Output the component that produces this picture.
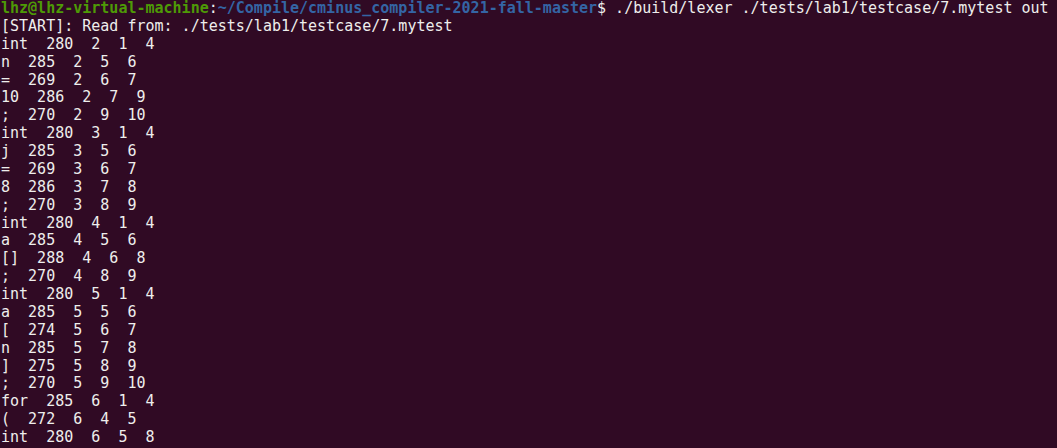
const lines: string[] = [
  "[START]: Read from: ./tests/lab1/testcase/7.mytest",
  "int  280  2  1  4",
  "n  285  2  5  6",
  "=  269  2  6  7",
  "10  286  2  7  9",
  ";  270  2  9  10",
  "int  280  3  1  4",
  "j  285  3  5  6",
  "=  269  3  6  7",
  "8  286  3  7  8",
  ";  270  3  8  9",
  "int  280  4  1  4",
  "a  285  4  5  6",
  "[]  288  4  6  8",
  ";  270  4  8  9",
  "int  280  5  1  4",
  "a  285  5  5  6",
  "[  274  5  6  7",
  "n  285  5  7  8",
  "]  275  5  8  9",
  ";  270  5  9  10",
  "for  285  6  1  4",
  "(  272  6  4  5",
  "int  280  6  5  8",
]

const App = () => {
  return (
    <div
      className="w-[1057px] h-[448px] overflow-hidden bg-[#300a24] text-[#eeeeec] text-[15px] leading-[17.875px] pl-[1px] whitespace-pre"
      style={{ fontFamily: '"DejaVu Sans Mono", "Liberation Mono", monospace' }}
    >
      <div>
        <span className="font-bold text-[#4e9a06]">lhz@lhz-virtual-machine</span>
        <span>:</span>
        <span className="font-bold text-[#3465a4]">~/Compile/cminus_compiler-2021-fall-master</span>
        <span>$ ./build/lexer ./tests/lab1/testcase/7.mytest out</span>
      </div>
      {lines.map((l, i) => (
        <div key={i}>{l}</div>
      ))}
    </div>
  )
}

export default App
